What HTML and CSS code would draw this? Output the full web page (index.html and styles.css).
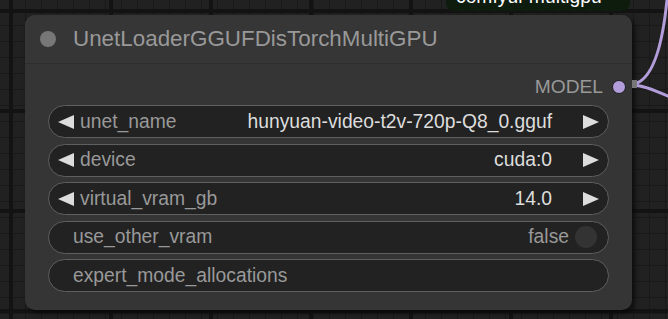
FILE: index.html
```html
<!DOCTYPE html>
<html lang="en">

<head>
    <meta charset="UTF-8">
    <meta name="viewport" content="width=device-width, initial-scale=1.0">
    <title>UnetLoaderGGUFDisTorchMultiGPU</title>
    <link rel="stylesheet" href="styles.css">
</head>

<body>
    <div class="canvas">
        <div class="badge">comfyui-multigpu</div>

        <svg class="links" width="668" height="319" viewBox="0 0 668 319">
            <path d="M634 84 C652 80, 662 50, 667 0" />
            <path d="M634 85 C646 86, 656 91, 670 97" />
            <rect x="632" y="80" width="5" height="8" fill="#777" stroke="none" />
        </svg>

        <div class="node">
            <div class="node-title">
                <span class="title-dot"></span>
                <span class="title-text">UnetLoaderGGUFDisTorchMultiGPU</span>
            </div>
            <div class="node-body">
                <div class="output">
                    <span>MODEL</span>
                    <span class="slot"></span>
                </div>
                <div class="widgets">
                    <div class="widget combo">
                        <span class="arrow left"></span>
                        <span class="label">unet_name</span>
                        <span class="value">hunyuan-video-t2v-720p-Q8_0.gguf</span>
                        <span class="arrow right"></span>
                    </div>
                    <div class="widget combo">
                        <span class="arrow left"></span>
                        <span class="label">device</span>
                        <span class="value">cuda:0</span>
                        <span class="arrow right"></span>
                    </div>
                    <div class="widget combo">
                        <span class="arrow left"></span>
                        <span class="label">virtual_vram_gb</span>
                        <span class="value">14.0</span>
                        <span class="arrow right"></span>
                    </div>
                    <div class="widget plain">
                        <span class="label">use_other_vram</span>
                        <span class="value dim">false</span>
                        <span class="toggle"></span>
                    </div>
                    <div class="widget plain">
                        <span class="label">expert_mode_allocations</span>
                    </div>
                </div>
            </div>
        </div>
    </div>
</body>

</html>
```

FILE: styles.css
```css
body {
    margin: 0;
    padding: 0;
    font-family: "Liberation Sans", Arial, sans-serif;
    background-color: #212121;
    background-image:
        linear-gradient(90deg, #131313 4px, transparent 4px),
        linear-gradient(#131313 4px, transparent 4px),
        linear-gradient(90deg, #191919 1px, transparent 1px),
        linear-gradient(#191919 1px, transparent 1px);
    background-size: 100px 100px, 100px 100px, 16px 16px, 16px 16px;
    background-position: 9px 0, 0 9px, 9px 0, 0 9px;
    overflow: hidden;
}

.canvas {
    position: relative;
    width: 668px;
    height: 319px;
    padding-top: 15px;
    box-sizing: border-box;
}

.badge {
    position: absolute;
    left: 446px;
    top: -14px;
    width: 184px;
    height: 25px;
    box-sizing: border-box;
    padding-left: 10px;
    background: #0e1c0e;
    border-radius: 0 0 8px 8px;
    color: #fff;
    font-size: 19.3px;
    line-height: 22px;
}

.links {
    position: absolute;
    left: 0;
    top: 0;
    z-index: 2;
}

.links path {
    fill: none;
    stroke: #b39ddb;
    stroke-width: 3;
}

.node {
    margin-left: 25px;
    width: 607px;
    height: 295px;
    background: #353535;
    border-radius: 10px;
    box-shadow: 3px 3px 5px rgba(0, 0, 0, 0.55);
    overflow: hidden;
}

.node-title {
    height: 48px;
    display: flex;
    align-items: center;
    padding-left: 15px;
    background: #363636;
    border-bottom: 1px solid #2e2e2e;
}

.title-dot {
    width: 16px;
    height: 16px;
    border-radius: 50%;
    background: #777;
}

.title-text {
    margin-left: 17px;
    font-size: 22.4px;
    color: #999;
}

.node-body {
    padding: 12px 23px 0 23px;
}

.output {
    height: 22px;
    display: flex;
    justify-content: flex-end;
    align-items: center;
    gap: 9px;
    margin-right: -17px;
    font-size: 19.2px;
    color: #999;
}

.slot {
    width: 12px;
    height: 12px;
    border-radius: 50%;
    background: #b39ddb;
    border: 1.5px solid #1e1e1e;
}

.widgets {
    margin-top: 7px;
    display: flex;
    flex-direction: column;
    gap: 5.5px;
}

.widget {
    height: 33px;
    box-sizing: border-box;
    display: flex;
    align-items: center;
    background: #222;
    border: 1.5px solid #5f5f5f;
    border-radius: 17px;
    font-size: 19.3px;
    color: #999;
}

.combo {
    padding: 0 9px;
}

.plain {
    padding: 0 11px 0 24px;
}

.label {
    flex: 1;
}

.combo .label {
    margin-left: 6px;
}

.value {
    color: #ddd;
}

.value.dim {
    color: #999;
}

.arrow {
    width: 0;
    height: 0;
    border-top: 7px solid transparent;
    border-bottom: 7px solid transparent;
}

.arrow.left {
    border-right: 16px solid #ddd;
}

.arrow.right {
    margin-left: 31px;
    border-left: 16px solid #ddd;
}

.toggle {
    width: 22px;
    height: 22px;
    margin-left: 6px;
    border-radius: 50%;
    background: #333;
}
```
